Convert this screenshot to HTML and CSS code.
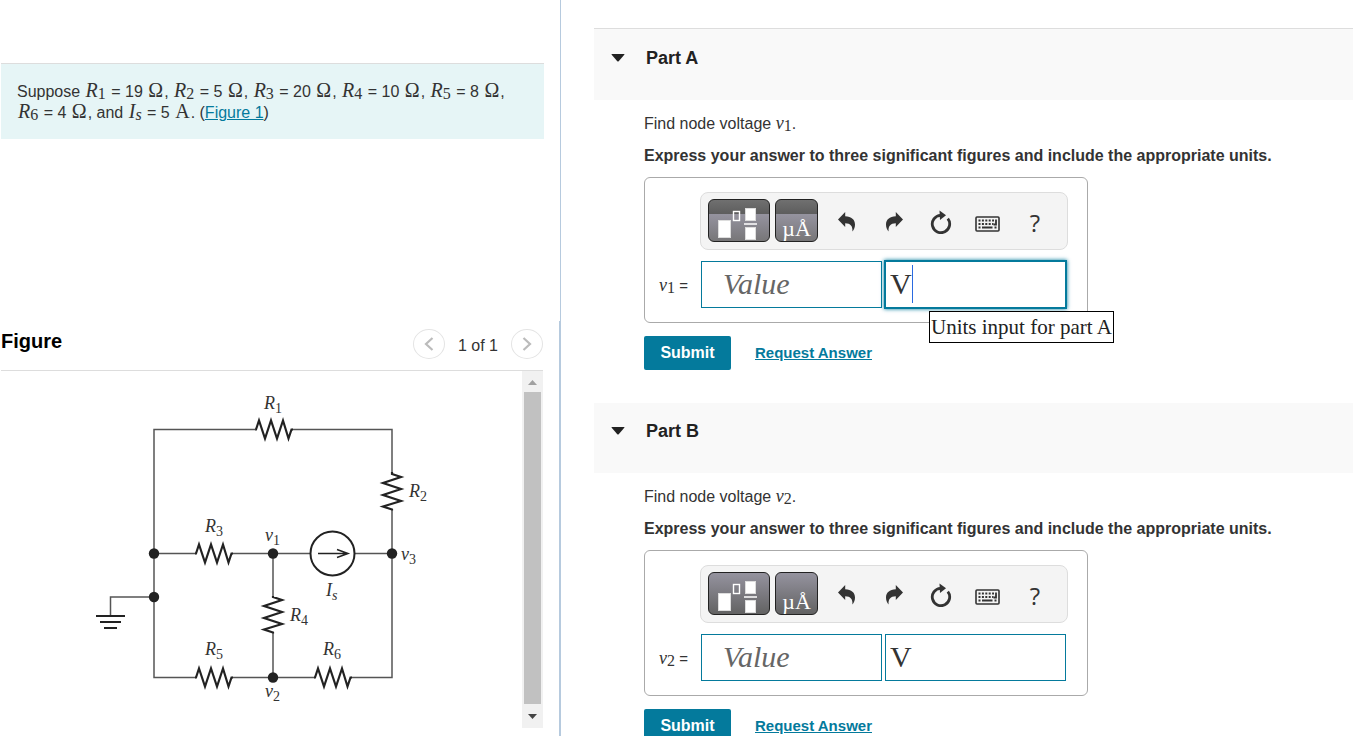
FILE: index.html
```html
<!DOCTYPE html>
<html lang="en">
<head>
  <meta charset="UTF-8">
  <meta name="viewport" content="width=device-width, initial-scale=1.0">
  <title>Node Voltages</title>
  <link rel="stylesheet" href="styles.css">
</head>
<body>
  <!-- shared toolbar icons -->
  <svg class="defs" width="0" height="0" aria-hidden="true">
    <symbol id="i-template" viewBox="0 0 62 43">
      <rect x="10.5" y="21.5" width="12" height="17" fill="#fff" stroke="#ddd"/>
      <rect x="25.5" y="12.5" width="6" height="9" fill="none" stroke="#fff" stroke-width="1.4"/>
      <rect x="37.5" y="9.5" width="10" height="12" fill="#fff" stroke="#ddd"/>
      <path d="M36 25h13" stroke="#fff" stroke-width="1.5"/>
      <rect x="37.5" y="28.5" width="10" height="12" fill="#fff" stroke="#ddd"/>
    </symbol>
    <symbol id="i-undo" viewBox="0 0 18 20">
      <path d="M0 7.5 7.2 0v4.2C13.500 4.500 17 7.600 17 12.400c0 2.600-.9 5-2.600 7.100.5-5.400-1.800-8-7.200-8.200v3.600z" fill="#333"/>
    </symbol>
    <symbol id="i-redo" viewBox="0 0 18 20">
      <path d="M18 7.5 10.8 0v4.200C4.500 4.500 1 7.600 1 12.400c0 2.600.9 5 2.600 7.100-.5-5.400 1.800-8 7.200-8.200v3.600z" fill="#333"/>
    </symbol>
    <symbol id="i-reset" viewBox="0 0 22 24">
      <path d="M17.800 8.600A8.700 8.700 0 1 1 10.500 5.300" fill="none" stroke="#333" stroke-width="2.800"/>
      <path d="M9.500 .5 16 5.200 10 10z" fill="#333"/>
    </symbol>
    <symbol id="i-keys" viewBox="0 0 26 16">
      <rect x="1" y="1" width="23" height="14" rx="1" fill="none" stroke="#333" stroke-width="1.600"/>
      <path d="M3.500 4.500h15.500M3.500 8h15M3.500 11.500h2M19.500 11.500h2" stroke="#333" stroke-width="1.800" stroke-dasharray="2 1.400"/>
      <path d="M7 11.500h10.500M21 3.500v5h-2.500" fill="none" stroke="#333" stroke-width="1.800"/>
    </symbol>
  </svg>

  <div class="page">
    <div class="left">
      <section class="problem">
        <p class="statement">Suppose <span class="math"><i>R</i><sub>1</sub></span> = 19 <span class="math">Ω</span>, <span class="math"><i>R</i><sub>2</sub></span> = 5 <span class="math">Ω</span>, <span class="math"><i>R</i><sub>3</sub></span> = 20 <span class="math">Ω</span>, <span class="math"><i>R</i><sub>4</sub></span> = 10 <span class="math">Ω</span>, <span class="math"><i>R</i><sub>5</sub></span> = 8 <span class="math">Ω</span>,<br><span class="math"><i>R</i><sub>6</sub></span> = 4 <span class="math">Ω</span>, and <span class="math"><i>I</i><sub><i>s</i></sub></span> = 5 <span class="math">A</span>. (<a href="#figure">Figure 1</a>)</p>
      </section>

      <section class="figure" id="figure">
        <div class="figure-head">
          <h2>Figure</h2>
          <button class="round" aria-label="Previous figure"><svg width="10" height="14" viewBox="0 0 10 14"><path d="M8.500 1 2 7l6.500 6" fill="none" stroke="#bbb" stroke-width="2.200"/></svg></button>
          <span class="count">1 of 1</span>
          <button class="round" aria-label="Next figure"><svg width="10" height="14" viewBox="0 0 10 14"><path d="M1.500 1 8 7l-6.500 6" fill="none" stroke="#bbb" stroke-width="2.200"/></svg></button>
        </div>
        <div class="figure-body">
          <svg class="circuit" width="440" height="357" viewBox="0 371 440 357" role="img" aria-label="Circuit diagram">
            <!-- wires -->
            <g fill="none" stroke="#555" stroke-width="1.500">
              <path d="M255 429.500H154V677.500H196"/>
              <path d="M292 429.500H392V473M392 509V677.500H351"/>
              <path d="M154 553.500H196M232 553.500H310M355 553.500H392"/>
              <path d="M154 597H110.500V616"/>
              <path d="M273 553.500V597M273 632V677.500M232 677.500H315"/>
            </g>
            <!-- resistors -->
            <g fill="none" stroke="#222" stroke-width="2.200">
              <path d="M255 429.500h1l3-9 6 18 6-18 6 18 6-18 5.500 18 3-9h1.500"/>
              <path d="M195 553.500h1l3-9 6 18 6-18 6 18 6-18 5.500 18 3-9h1.500"/>
              <path d="M195 677.500h1l3-9 6 18 6-18 6 18 6-18 5.500 18 3-9h1.500"/>
              <path d="M314 677.500h1l3-9 6 18 6-18 6 18 6-18 5.500 18 3-9h1.500"/>
              <path d="M392 472v2l9 3-18 6 18 6-18 6 18 6-18 5.500 9 3v1"/>
              <path d="M273 596v1l9 3-18 6 18 6-18 6 18 6-18 5.500 9 3v1"/>
            </g>
            <!-- ground -->
            <path d="M96 616h29M100 622h21M104 628h13" stroke="#222" stroke-width="2.200"/>
            <!-- current source -->
            <circle cx="332.500" cy="553.500" r="22" fill="none" stroke="#222" stroke-width="2"/>
            <path d="M318 553.500h29M337 549.500l11 4-11 4" fill="none" stroke="#222" stroke-width="1.500"/>
            <g fill="#222">
              <circle cx="154" cy="553.500" r="5.200"/>
              <circle cx="154" cy="597" r="5.200"/>
              <circle cx="273" cy="553.500" r="5.200"/>
              <circle cx="392" cy="553.500" r="5.200"/>
              <circle cx="273" cy="677.500" r="5.200"/>
            </g>
            <g class="names">
              <text x="264" y="409">R<tspan class="low" dy="4">1</tspan></text>
              <text x="409" y="497">R<tspan class="low" dy="4">2</tspan></text>
              <text x="205" y="532">R<tspan class="low" dy="4">3</tspan></text>
              <text x="290" y="621">R<tspan class="low" dy="4">4</tspan></text>
              <text x="205" y="655">R<tspan class="low" dy="4">5</tspan></text>
              <text x="323" y="655">R<tspan class="low" dy="4">6</tspan></text>
              <text x="265" y="541">v<tspan class="low" dy="4">1</tspan></text>
              <text x="265" y="697">v<tspan class="low" dy="4">2</tspan></text>
              <text x="401" y="560">v<tspan class="low" dy="4">3</tspan></text>
              <text x="326" y="596">I<tspan class="low slant" dy="4">s</tspan></text>
            </g>
          </svg>
          <div class="scroll">
            <svg width="9" height="5" viewBox="0 0 9 5"><path d="M4.500 0 9 5H0z" fill="#a0a0a0"/></svg>
            <div class="thumb"></div>
            <svg width="9" height="5" viewBox="0 0 9 5"><path d="M0 0h9L4.500 5z" fill="#444"/></svg>
          </div>
        </div>
      </section>
    </div>

    <main class="right">
      <section class="part">
        <div class="part-head part-first">
          <svg width="14" height="8" viewBox="0 0 14 8"><path d="M1 0h12q1 0 .3.8L7.700 7.200q-.7.700-1.400 0L.7.800Q0 0 1 0z" fill="#222"/></svg>
          <h3>Part A</h3>
        </div>
        <div class="part-body">
          <p>Find node voltage <span class="math small"><i>v</i><sub>1</sub></span>.</p>
          <p class="hint">Express your answer to three significant figures and include the appropriate units.</p>
          <div class="answer">
            <div class="toolbar">
              <button class="dark wide split" aria-label="Templates"><svg width="62" height="43"><use href="#i-template"/></svg></button>
              <button class="dark split">µÅ</button>
              <div class="tools">
                <button aria-label="Undo"><svg width="18" height="20"><use href="#i-undo"/></svg></button>
                <button aria-label="Redo"><svg width="18" height="20"><use href="#i-redo"/></svg></button>
                <button aria-label="Reset"><svg width="22" height="24"><use href="#i-reset"/></svg></button>
                <button class="keys" aria-label="Keyboard shortcuts"><svg width="26" height="16"><use href="#i-keys"/></svg></button>
                <button class="help">?</button>
              </div>
            </div>
            <div class="entry">
              <label for="value-a"><span class="math small"><i>v</i><sub>1</sub></span> =</label>
              <input class="value" id="value-a" type="text" placeholder="Value">
              <div class="units-wrap">
                <input class="units active" type="text" value="V" aria-label="Units input for part A">
                <span class="caret"></span>
                <span class="tip">Units input for part A</span>
              </div>
            </div>
          </div>
          <div class="actions">
            <button class="submit">Submit</button>
            <a href="#">Request Answer</a>
          </div>
        </div>
      </section>

      <section class="part">
        <div class="part-head">
          <svg width="14" height="8" viewBox="0 0 14 8"><path d="M1 0h12q1 0 .3.8L7.700 7.200q-.7.700-1.400 0L.7.800Q0 0 1 0z" fill="#222"/></svg>
          <h3>Part B</h3>
        </div>
        <div class="part-body">
          <p>Find node voltage <span class="math small"><i>v</i><sub>2</sub></span>.</p>
          <p class="hint">Express your answer to three significant figures and include the appropriate units.</p>
          <div class="answer">
            <div class="toolbar">
              <button class="dark wide" aria-label="Templates"><svg width="62" height="43"><use href="#i-template"/></svg></button>
              <button class="dark">µÅ</button>
              <div class="tools">
                <button aria-label="Undo"><svg width="18" height="20"><use href="#i-undo"/></svg></button>
                <button aria-label="Redo"><svg width="18" height="20"><use href="#i-redo"/></svg></button>
                <button aria-label="Reset"><svg width="22" height="24"><use href="#i-reset"/></svg></button>
                <button class="keys" aria-label="Keyboard shortcuts"><svg width="26" height="16"><use href="#i-keys"/></svg></button>
                <button class="help">?</button>
              </div>
            </div>
            <div class="entry">
              <label for="value-b"><span class="math small"><i>v</i><sub>2</sub></span> =</label>
              <input class="value" id="value-b" type="text" placeholder="Value">
              <div class="units-wrap">
                <input class="units" type="text" value="V" aria-label="Units input for part B">
              </div>
            </div>
          </div>
          <div class="actions">
            <button class="submit">Submit</button>
            <a href="#">Request Answer</a>
          </div>
        </div>
      </section>
    </main>
  </div>
</body>
</html>
```

FILE: styles.css
```css
* {
  box-sizing: border-box;
}
body {
  margin: 0;
  font-family: "Liberation Sans", Arial, sans-serif;
  font-size: 15px;
  line-height: 20px;
  color: #333;
  background: #fff;
}
h2, h3, p {
  margin: 0;
}
a {
  color: #047a9c;
}
button {
  font-family: inherit;
  padding: 0;
  border: none;
  background: none;
  cursor: pointer;
}
svg {
  display: block;
}
.defs {
  position: absolute;
}
.page {
  display: grid;
  grid-template-columns: 561fr 792fr;
  grid-template-rows: 100vh;
  height: 100vh;
  overflow: hidden;
}

/* left column */
.left {
  display: grid;
  grid-template-rows: 321px 1fr;
  min-height: 0;
}
.problem {
  padding: 63px 16px 0 1px;
  border-right: 1px solid #b6cade;
}
.statement {
  padding: 17px 16px 16px;
  border-top: 1px solid #ddd;
  background: #e6f5f6;
  font-size: 16px;
  line-height: 21px;
  white-space: nowrap;
}
.math {
  margin: 0 1px;
  font-family: "Liberation Serif", "Times New Roman", serif;
  font-size: 20px;
  line-height: 1px;
}
.math sub {
  font-size: 16px;
  line-height: 1px;
  vertical-align: -2px;
}
.figure {
  display: flex;
  flex-direction: column;
  min-height: 0;
  padding: 0 16px 8px 1px;
  border-right: 2px solid #b6cade;
}
.figure-head {
  display: flex;
  align-items: center;
  height: 50px;
  padding-bottom: 3px;
  border-bottom: 1px solid #ddd;
}
.figure-head h2 {
  flex: 1;
  padding-bottom: 6px;
  font-size: 20px;
  color: #000;
}
.round {
  display: flex;
  align-items: center;
  justify-content: center;
  width: 32px;
  height: 30px;
  border: 1px solid #e4e4e4;
  border-radius: 50%;
}
.count {
  padding: 4px 13px 0;
  font-size: 16px;
}
.figure-body {
  display: flex;
  flex: 1;
  justify-content: space-between;
  min-height: 0;
}
.circuit {
  margin-left: -1px;
}
.names {
  font: italic 18px "Liberation Serif", serif;
  fill: #333;
}
.low {
  font-size: 14px;
  font-style: normal;
}
.slant {
  font-style: italic;
}
.scroll {
  display: flex;
  flex-direction: column;
  align-items: center;
  width: 21px;
  padding: 9px 0;
  background: #f1f1f1;
}
.thumb {
  flex: 1;
  width: 17px;
  margin: 7px 0 10px;
  background: #c1c1c1;
}

/* right column */
.right {
  padding: 28px 0 0 33px;
  min-width: 0;
}
.part-head {
  display: flex;
  align-items: center;
  gap: 21px;
  height: 70px;
  padding: 0 17px 14px;
  background: #f9f9f9;
}
.part-first {
  height: 72px;
  border-top: 1px solid #ddd;
}
.part-head h3 {
  font-size: 18px;
  color: #222;
}
.part-body {
  padding: 14px 16px 33px 50px;
}
.part-body p {
  margin-bottom: 12px;
  font-size: 16px;
}
.part-body .hint {
  margin-bottom: 11px;
  font-weight: bold;
}
.math.small {
  margin: 0;
  font-size: 18px;
}
.small sub {
  font-size: 16px;
}
.answer {
  width: 444px;
  padding: 14px 19px 14px 14px;
  border: 1px solid #aaa;
  border-radius: 6px;
}
.toolbar {
  display: flex;
  align-items: center;
  gap: 5px;
  height: 58px;
  margin: 0 0 11px 41px;
  padding: 0 7px 2px;
  border: 1px solid #ddd;
  border-radius: 8px;
  background: #f4f4f4;
}
.dark {
  width: 43px;
  height: 43px;
  padding-top: 16px;
  border: 1px solid #222;
  border-radius: 6px;
  background: linear-gradient(#95939f, #626262);
  color: #fff;
  font: 22px "Liberation Serif", serif;
}
.wide {
  width: 62px;
  padding: 0;
}
.wide svg {
  margin: -1px;
}
.split {
  background: linear-gradient(#707070 0, #5d5d5d 34%, #95939f 35%, #777678 100%);
}
.tools {
  display: flex;
  gap: 5px;
  margin: 4px 0 0 3px;
}
.tools button {
  display: flex;
  align-items: center;
  justify-content: center;
  width: 42px;
  height: 42px;
  color: #333;
}
.tools .keys {
  padding-top: 4px;
}
.tools .help {
  font: 24px "Open Sans", sans-serif;
}
.entry {
  display: flex;
  align-items: center;
}
.entry label {
  width: 42px;
  padding-top: 2px;
}
.entry input {
  width: 181px;
  height: 47px;
  border: 1px solid #047a9c;
  background: #fff;
  color: #333;
  font: 30px "Liberation Serif", serif;
  outline: none;
}
.entry .value {
  padding: 0 21px 2px;
  font-style: italic;
}
.value::placeholder {
  color: #666;
}
.units-wrap {
  position: relative;
  margin-left: 3px;
}
.entry .units {
  display: block;
  padding: 0 4px 2px;
}
.entry .active {
  box-shadow: 0 0 0 1px #047a9c, 0 0 4px 1px #047a9c;
}
.caret {
  position: absolute;
  top: 4px;
  left: 27px;
  width: 1px;
  height: 38px;
  background: #2a6ae0;
}
.tip {
  position: absolute;
  top: 50px;
  left: 44px;
  padding: 0 1px;
  border: 1px solid #000;
  background: #fff;
  color: #222;
  font: 21px/30px "Liberation Serif", serif;
  white-space: nowrap;
}
.actions {
  display: flex;
  align-items: center;
  gap: 24px;
  margin-top: 13px;
}
.submit {
  width: 87px;
  height: 34px;
  border-radius: 2px;
  background: #047a9c;
  color: #fff;
  font-size: 16px;
  font-weight: bold;
}
.actions a {
  font-weight: bold;
}
```
